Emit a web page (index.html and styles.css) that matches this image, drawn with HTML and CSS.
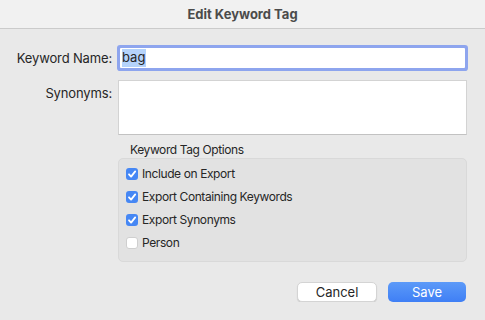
FILE: index.html
```html
<!DOCTYPE html>
<html lang="en">
<head>
    <meta charset="UTF-8">
    <title>Edit Keyword Tag</title>
    <link rel="stylesheet" href="styles.css">
</head>
<body>

<!-- Title Bar -->
<header class="titlebar">
    <h1>Edit Keyword Tag</h1>
</header>

<!-- Form -->
<main class="sheet">
    <div class="form">
        <label class="label label-name">Keyword Name:</label>
        <div class="field field-focus"><span class="selected">bag</span></div>

        <label class="label label-top">Synonyms:</label>
        <div class="textarea"></div>

        <div></div>
        <div class="group">
            <div class="group-title">Keyword Tag Options</div>
            <div class="group-box">
                <div class="check-row">
                    <span class="checkbox checked">
                        <svg width="12" height="12" viewBox="0 0 12 12"><path d="M3 6.3 L5.1 8.6 L9.2 3.4" fill="none" stroke="#fff" stroke-width="1.8" stroke-linecap="round" stroke-linejoin="round"/></svg>
                    </span>
                    <span>Include on Export</span>
                </div>
                <div class="check-row">
                    <span class="checkbox checked">
                        <svg width="12" height="12" viewBox="0 0 12 12"><path d="M3 6.3 L5.1 8.6 L9.2 3.4" fill="none" stroke="#fff" stroke-width="1.8" stroke-linecap="round" stroke-linejoin="round"/></svg>
                    </span>
                    <span>Export Containing Keywords</span>
                </div>
                <div class="check-row">
                    <span class="checkbox checked">
                        <svg width="12" height="12" viewBox="0 0 12 12"><path d="M3 6.3 L5.1 8.6 L9.2 3.4" fill="none" stroke="#fff" stroke-width="1.8" stroke-linecap="round" stroke-linejoin="round"/></svg>
                    </span>
                    <span>Export Synonyms</span>
                </div>
                <div class="check-row">
                    <span class="checkbox"></span>
                    <span>Person</span>
                </div>
            </div>
        </div>
    </div>

    <!-- Buttons -->
    <div class="buttons">
        <button class="btn btn-cancel">Cancel</button>
        <button class="btn btn-save">Save</button>
    </div>
</main>

</body>
</html>
```

FILE: styles.css
```css
/* General Reset and Fonts */
body {
    font-family: 'Inter', 'Liberation Sans', sans-serif;
    font-size: 13px;
    background-color: #e9e9e9;
    margin: 0;
    padding: 0;
    color: #262626;
}

/* Title Bar */
.titlebar {
    height: 28px;
    background-color: #f1f1f1;
    border-bottom: 1px solid #cbcbcb;
    display: flex;
    align-items: center;
    justify-content: center;
}

.titlebar h1 {
    margin: 0;
    font-size: 13px;
    font-weight: 700;
    color: #4b4b4b;
}

/* Form */
.form {
    display: grid;
    grid-template-columns: 112px 1fr;
    column-gap: 6px;
    row-gap: 10px;
    padding: 17px 18px 0 0;
}

.label {
    text-align: right;
    white-space: nowrap;
    letter-spacing: -0.15px;
}

.label-name {
    align-self: center;
}

.label-top {
    padding-top: 5px;
}

.field {
    height: 20px;
    margin: 2px;
    background-color: #fff;
    border-radius: 1px;
    display: flex;
    align-items: center;
    padding-left: 2px;
}

.field-focus {
    box-shadow: 0 0 0 3px #8ea5ee;
}

.selected {
    background-color: #b5d3fb;
    padding: 1px 1px 2px 0;
    line-height: 15px;
}

.textarea {
    height: 53px;
    background-color: #fff;
    border: 1px solid #d3d3d3;
    border-bottom-color: #c2c2c2;
}

/* Options Group */
.group {
    margin-top: -3px;
    font-size: 12px;
    letter-spacing: -0.4px;
}

.group-title {
    line-height: 16px;
    padding-left: 12px;
}

.group-box {
    background-color: #e2e2e2;
    border: 1px solid #d9d9d9;
    border-radius: 5px;
    padding: 3px 0 7px 7px;
}

.check-row {
    height: 23px;
    display: flex;
    align-items: center;
    gap: 4px;
}

.checkbox {
    width: 12px;
    height: 12px;
    box-sizing: border-box;
    border-radius: 3px;
    background-color: #fff;
    border: 1px solid #cfcfcf;
    display: flex;
}

.checkbox.checked {
    background-color: #4687f4;
    border: none;
}

/* Buttons */
.buttons {
    display: flex;
    justify-content: flex-end;
    gap: 11px;
    padding: 20px 19px 0 0;
}

.btn {
    height: 20px;
    font-family: inherit;
    font-size: 13px;
    border-radius: 5px;
    padding: 0;
}

.btn-cancel {
    width: 80px;
    background-color: #fff;
    color: #262626;
    border: 1px solid #d4d4d4;
    box-shadow: 0 1px 1px rgba(0,0,0,0.12);
}

.btn-save {
    width: 78px;
    color: #fff;
    border: none;
    background: linear-gradient(#5c9af8, #3f7ff5);
}
```
